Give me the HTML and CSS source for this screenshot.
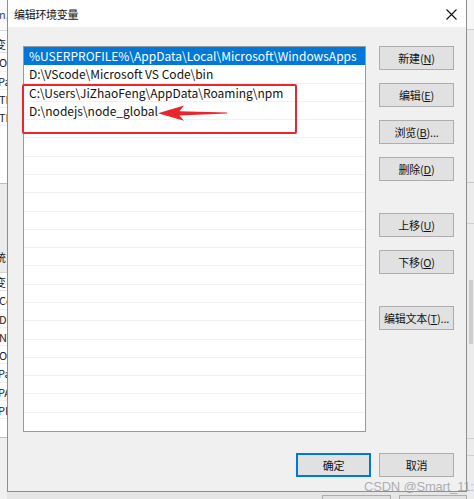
FILE: index.html
```html
<!DOCTYPE html>
<html lang="zh-CN">
<head>
<meta charset="utf-8">
<title>编辑环境变量</title>
<link rel="stylesheet" href="styles.css">
</head>
<body>
<div class="screen">
  <div class="bg-left">
    <div class="bl-top"><span class="frag">n.</span></div>
    <div class="bl-list one">
      <div class="bl-row head"><span class="frag cut">变</span></div>
      <div class="bl-row"><span class="frag">O</span></div>
      <div class="bl-row"><span class="frag cut2">Pa</span></div>
      <div class="bl-row"><span class="frag">TE</span></div>
      <div class="bl-row"><span class="frag">TM</span></div>
    </div>
    <div class="bl-gap"><span class="frag cut label">统</span></div>
    <div class="bl-list two">
      <div class="bl-row head"><span class="frag cut">变</span></div>
      <div class="bl-row"><span class="frag">Co</span></div>
      <div class="bl-row"><span class="frag">Dr</span></div>
      <div class="bl-row"><span class="frag">NU</span></div>
      <div class="bl-row"><span class="frag">OS</span></div>
      <div class="bl-row"><span class="frag cut2">Pa</span></div>
      <div class="bl-row"><span class="frag cut2">PA</span></div>
      <div class="bl-row"><span class="frag cut2">PR</span></div>
    </div>
  </div>

  <div class="dialog">
    <div class="titlebar">
      <span class="title">编辑环境变量</span>
      <svg class="close" width="11" height="11" viewBox="0 0 11 11"><path d="M0.5 0.5 L10.5 10.5 M10.5 0.5 L0.5 10.5" stroke="#111" stroke-width="1.1" fill="none"/></svg>
    </div>
    <div class="body">
      <div class="main">
        <div class="list">
          <div class="row sel">%USERPROFILE%\AppData\Local\Microsoft\WindowsApps</div>
          <div class="row">D:\VScode\Microsoft VS Code\bin</div>
          <div class="row">C:\Users\JiZhaoFeng\AppData\Roaming\npm</div>
          <div class="row">D:\nodejs\node_global</div>
          <div class="row"></div><div class="row"></div><div class="row"></div>
          <div class="row"></div><div class="row"></div><div class="row"></div>
          <div class="row"></div><div class="row"></div><div class="row"></div>
          <div class="row"></div><div class="row"></div><div class="row"></div>
          <div class="row"></div><div class="row"></div><div class="row"></div>
          <div class="row"></div><div class="row last"></div>
          <div class="mark-box"></div>
          <svg class="mark-arrow" width="76" height="20" viewBox="0 0 76 20"><path d="M4 10.3 L30 2.6 L25.5 8.2 L73 9.4 L73 10.6 L25.5 12.6 L30 17.8 Z" fill="#e8262b"/></svg>
        </div>
        <div class="side">
          <div class="group">
            <button class="btn">新建(<u>N</u>)</button>
            <button class="btn">编辑(<u>E</u>)</button>
            <button class="btn">浏览(<u>B</u>)...</button>
            <button class="btn">删除(<u>D</u>)</button>
          </div>
          <div class="group">
            <button class="btn">上移(<u>U</u>)</button>
            <button class="btn">下移(<u>O</u>)</button>
          </div>
          <div class="group">
            <button class="btn">编辑文本(<u>T</u>)...</button>
          </div>
        </div>
      </div>
      <div class="footer">
        <button class="btn default">确定</button>
        <button class="btn">取消</button>
      </div>
    </div>
  </div>

  <div class="bg-right">
    <div class="br-a"></div>
    <div class="br-b"></div>
    <div class="br-c"></div>
    <div class="br-thumb"></div>
    <div class="br-d"></div>
  </div>
  <div class="bg-bottom">
    <div class="bb-btn one"></div>
    <div class="bb-btn two"></div>
  </div>

  <div class="watermark">CSDN @Smart_11:</div>
</div>
</body>
</html>
```
FILE: styles.css
```css
* { box-sizing: border-box; }
html, body { margin: 0; padding: 0; }
body {
  width: 474px;
  height: 499px;
  overflow: hidden;
  background: #f0f0f0;
  font-family: "Noto Sans CJK SC", "Noto Sans", sans-serif;
  font-size: 12px;
  color: #000;
}
.screen {
  position: relative;
  width: 474px;
  height: 499px;
  display: grid;
  grid-template-columns: 7px 460px 7px;
  grid-template-rows: 492px 7px;
  overflow: hidden;
}

/* background window, left strip */
.bg-left {
  grid-column: 1;
  grid-row: 1 / 3;
  overflow: hidden;
  background: #f0f0f0;
  display: flex;
  flex-direction: column;
  font-size: 11px;
  color: #222;
}
.frag { display: block; white-space: nowrap; line-height: 18px; margin-left: -1px; }
.frag.cut { margin-left: -5px; }
.frag.cut2 { margin-left: -2px; }
.bl-top { height: 30px; padding-top: 5px; background: #fafafa; color: #2a4f8a; }
.bl-list { background: #fff; border-top: 1px solid #d6d6d6; border-bottom: 1px solid #bdbdbd; }
.bl-list.one { height: 154px; padding-top: 4px; }
.bl-list.two { height: 166px; }
.bl-row { height: 18.3px; border-bottom: 1px solid #f0f0f0; overflow: hidden; }
.bl-row.head { background: #fff; border-bottom: 1px solid #e0e0e0; }
.bl-gap { height: 88px; padding-top: 64px; background: #ececec; }

/* right strip */
.bg-right {
  grid-column: 3;
  grid-row: 1 / 3;
  background: #ececec;
  display: flex;
  flex-direction: column;
}
.br-a { height: 30px; background: #f6f6f6; border-bottom: 1px solid #cfcfcf; }
.br-b { height: 153px; border-bottom: 1px solid #c8c8c8; }
.br-c { height: 41px; border-bottom: 1px solid #cfcfcf; }
.br-thumb { margin-top: 56px; height: 64px; width: 4px; margin-left: 2px; background: #cdcdcd; }
.br-d { margin-top: 94px; height: 18px; border-top: 1px solid #cfcfcf; border-bottom: 1px solid #cfcfcf; }

/* bottom strip */
.bg-bottom {
  grid-column: 2;
  grid-row: 2;
  background: #e6e6e6;
  display: flex;
  padding-top: 3px;
}
.bb-btn { height: 10px; border: 1px solid #adadad; background: #e1e1e1; }
.bb-btn.one { margin-left: 315px; width: 75px; }
.bb-btn.two { margin-left: 8px; width: 75px; }

/* dialog */
.dialog {
  grid-column: 2;
  grid-row: 1;
  display: flex;
  flex-direction: column;
  background: #f0f0f0;
  border-left: 1px solid #8e8e8e;
  border-right: 1px solid #8e8e8e;
  border-bottom: 1px solid #8e8e8e;
}
.titlebar {
  height: 27px;
  background: #fff;
  display: flex;
  align-items: center;
  justify-content: space-between;
  padding: 0 9px 0 6px;
}
.title { font-size: 11px; color: #111; letter-spacing: -0.3px; }
.close { display: block; margin-top: 1px; }
.body {
  flex: 1;
  display: flex;
  flex-direction: column;
  padding: 19px 12px 0 15px;
}
.main { display: flex; gap: 13px; height: 386px; }
.list {
  position: relative;
  width: 343px;
  height: 386px;
  background: #fff;
  border: 1px solid #9a9a9a;
  overflow: visible;
}
.row {
  height: 18.29px;
  line-height: 17.3px;
  padding-left: 5px;
  border-bottom: 1px solid #f1f1f1;
  white-space: nowrap;
  font-size: 12px;
  color: #111;
}
.row.sel { background: #0078d7; color: #fff; border-bottom-color: #0078d7; }
.row.last { border-bottom: none; }
.mark-box {
  position: absolute;
  left: -2px;
  top: 37px;
  width: 275px;
  height: 50px;
  border: 2px solid #e8262b;
  border-radius: 2px;
}
.mark-arrow { position: absolute; left: 130px; top: 56px; }

.side { display: flex; flex-direction: column; gap: 32px; }
.group { display: flex; flex-direction: column; gap: 13px; }
.btn {
  width: 75px;
  height: 24px;
  padding: 0;
  margin: 0;
  background: #e1e1e1;
  border: 1px solid #adadad;
  font-family: "Noto Sans CJK SC", "Noto Sans", sans-serif;
  font-size: 11px;
  color: #111;
  line-height: 20px;
  text-align: center;
  letter-spacing: -0.2px;
}
.btn u { text-underline-offset: 1px; }
.btn.default { border: 1px solid #0078d7; box-shadow: inset 0 0 0 1px #0078d7; }
.footer {
  display: flex;
  justify-content: flex-end;
  gap: 8px;
  margin-top: 21px;
}

.watermark {
  position: absolute;
  left: 364px;
  top: 479px;
  font-family: "Liberation Sans", Arial, sans-serif;
  font-size: 13px;
  color: rgba(150, 150, 150, 0.75);
  white-space: nowrap;
  letter-spacing: -0.2px;
}
```
